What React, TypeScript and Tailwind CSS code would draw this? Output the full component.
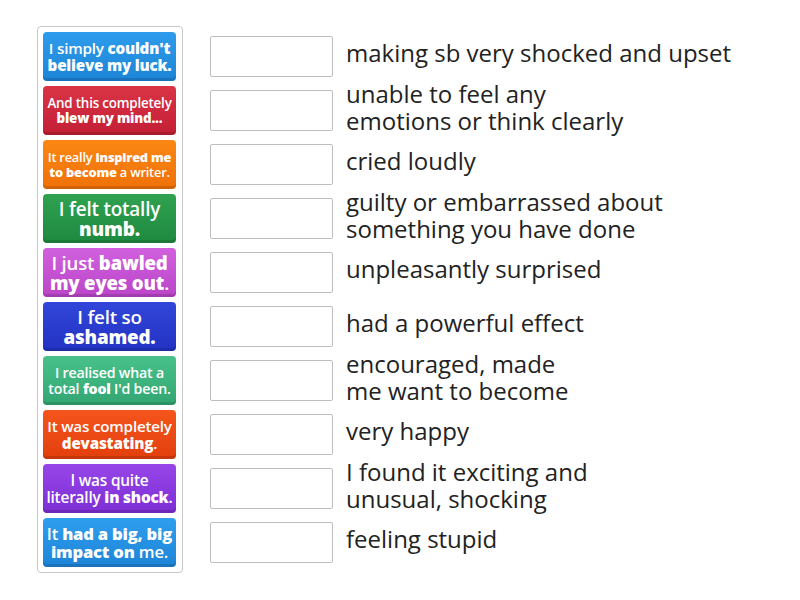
import React from 'react';

type Seg = [string, boolean];

const tiles: { lines: Seg[][]; size: string; bg: string }[] = [
  {
    lines: [[['I simply ', false], ["couldn't", true]], [['believe my luck.', true]]],
    size: 'text-[15.2px] leading-[17px]',
    bg: 'from-[#2e9cec] to-[#1d84d6]',
  },
  {
    lines: [[['And this completely', false]], [['blew my mind...', true]]],
    size: 'text-[13.4px] leading-[15px]',
    bg: 'from-[#da3346] to-[#c21e35]',
  },
  {
    lines: [[['It really ', false], ['inspired me', true]], [['to become', true], [' a writer.', false]]],
    size: 'text-[12.8px] leading-[15px]',
    bg: 'from-[#fb8714] to-[#ef7107]',
  },
  {
    lines: [[['I felt totally', false]], [['numb.', true]]],
    size: 'text-[18.9px] leading-[20px]',
    bg: 'from-[#2fa250] to-[#1e8940]',
  },
  {
    lines: [[['I just ', false], ['bawled', true]], [['my eyes out', true], ['.', false]]],
    size: 'text-[18.6px] leading-[20px]',
    bg: 'from-[#d160de] to-[#ba45c8]',
  },
  {
    lines: [[['I felt so', false]], [['ashamed.', true]]],
    size: 'text-[18.8px] leading-[20px]',
    bg: 'from-[#3246da] to-[#2232c2]',
  },
  {
    lines: [[['I realised what a', false]], [['total ', false], ['fool', true], [" I'd been.", false]]],
    size: 'text-[14.2px] leading-[16px]',
    bg: 'from-[#48c18a] to-[#33a672]',
  },
  {
    lines: [[['It was completely', false]], [['devastating', true], ['.', false]]],
    size: 'text-[15.2px] leading-[17px]',
    bg: 'from-[#f5551c] to-[#e23e0d]',
  },
  {
    lines: [[['I was quite', false]], [['literally ', false], ['in shock', true], ['.', false]]],
    size: 'text-[15.4px] leading-[17px]',
    bg: 'from-[#9645e8] to-[#7d2ed4]',
  },
  {
    lines: [[['It ', false], ['had a big, big', true]], [['impact on', true], [' me.', false]]],
    size: 'text-[16.6px] leading-[18px]',
    bg: 'from-[#2f9eee] to-[#1d84d6]',
  },
];

const answers: string[][] = [
  ['making sb very shocked and upset'],
  ['unable to feel any', 'emotions or think clearly'],
  ['cried loudly'],
  ['guilty or embarrassed about', 'something you have done'],
  ['unpleasantly surprised'],
  ['had a powerful effect'],
  ['encouraged, made', 'me want to become'],
  ['very happy'],
  ['I found it exciting and', 'unusual, shocking'],
  ['feeling stupid'],
];

const App = () => {
  return (
    <div
      className="w-[800px] h-[600px] bg-white flex items-start pt-[26px] pl-[37px] gap-[27px]"
      style={{ fontFamily: '"Open Sans", "Noto Sans", sans-serif' }}
    >
      <div className="w-[146px] border border-[#c8c8c8] rounded-[4px] pl-[5px] pr-[6px] pt-[5px] pb-[5px] flex flex-col gap-[5px] bg-white">
        {tiles.map((t, i) => (
          <div
            key={i}
            className={`h-[49px] w-[133px] rounded-[4px] bg-gradient-to-b ${t.bg} shadow-[inset_0_-3px_0_rgba(0,0,0,0.13)] flex flex-col items-center justify-center text-white font-semibold whitespace-nowrap tracking-[-0.2px] ${t.size}`}
          >
            {t.lines.map((line, j) => (
              <div key={j}>
                {line.map(([txt, bold], k) => (
                  <span key={k} className={bold ? 'font-extrabold' : ''}>
                    {txt}
                  </span>
                ))}
              </div>
            ))}
          </div>
        ))}
      </div>

      <div className="flex flex-col gap-[5px] pt-[6px]">
        {answers.map((a, i) => (
          <div key={i} className="h-[49px] flex items-center gap-[13px]">
            <div className="w-[123px] h-[41px] border border-[#bdbdbd] rounded-[2px] bg-white shrink-0" />
            <div className="text-[24px] leading-[27px] text-[#222222] whitespace-nowrap -mt-[8px]">
              {a.map((l, j) => (
                <div key={j}>{l}</div>
              ))}
            </div>
          </div>
        ))}
      </div>
    </div>
  );
};

export default App;
